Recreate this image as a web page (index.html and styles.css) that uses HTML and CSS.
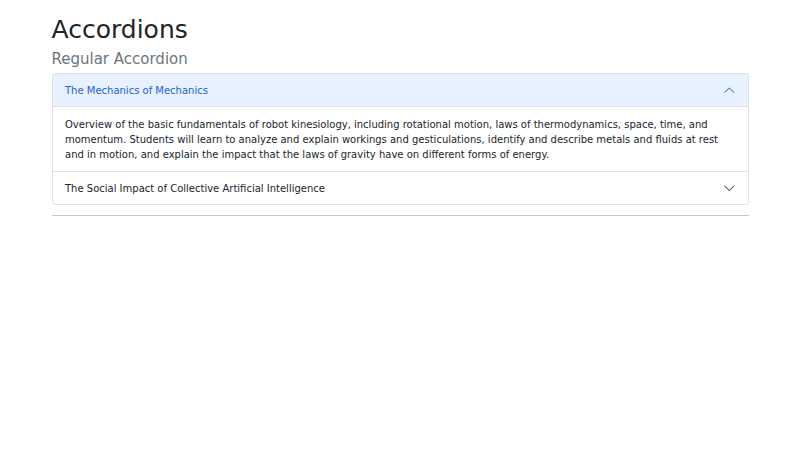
FILE: index.html
```html
<!DOCTYPE html>
<html lang="en">
<head>
  <meta charset="UTF-8">
  <title>Accordions</title>
  <link rel="stylesheet" href="styles.css">
</head>
<body>
  <div class="container">
    <h1 class="title">Accordions</h1>
    <h2 class="subtitle">Regular Accordion</h2>

    <!-- Accordion -->
    <div class="accordion">
      <div class="accordion-item">
        <button class="accordion-button open" type="button">
          <span>The Mechanics of Mechanics</span>
          <svg class="chevron up" viewBox="0 0 16 16"><path fill="currentColor" fill-rule="evenodd" d="M1.646 4.646a.5.5 0 0 1 .708 0L8 10.293l5.646-5.647a.5.5 0 0 1 .708.708l-6 6a.5.5 0 0 1-.708 0l-6-6a.5.5 0 0 1 0-.708z"/></svg>
        </button>
        <div class="accordion-body">
          Overview of the basic fundamentals of robot kinesiology, including rotational motion, laws of thermodynamics, space, time, and momentum. Students will learn to analyze and explain workings and gesticulations, identify and describe metals and fluids at rest and in motion, and explain the impact that the laws of gravity have on different forms of energy.
        </div>
      </div>
      <div class="accordion-item">
        <button class="accordion-button" type="button">
          <span>The Social Impact of Collective Artificial Intelligence</span>
          <svg class="chevron" viewBox="0 0 16 16"><path fill="currentColor" fill-rule="evenodd" d="M1.646 4.646a.5.5 0 0 1 .708 0L8 10.293l5.646-5.647a.5.5 0 0 1 .708.708l-6 6a.5.5 0 0 1-.708 0l-6-6a.5.5 0 0 1 0-.708z"/></svg>
        </button>
      </div>
    </div>

    <hr class="divider">
  </div>
</body>
</html>
```

FILE: styles.css
```css
body {
  margin: 0;
  font-family: "DejaVu Sans", sans-serif;
  color: #212529;
  background: #fff;
}

.container {
  max-width: 697px;
  margin: 0 auto;
  padding: 0 7.5px 0 7.5px;
}

.title {
  font-size: 25px;
  font-weight: 400;
  line-height: 30px;
  margin: 15px 0 5px;
}

.subtitle {
  font-size: 15px;
  font-weight: 400;
  line-height: 18px;
  color: #6c757d;
  margin: 0 0 5px;
}

.accordion {
  border: 1px solid #dee2e6;
  border-radius: 2.5px;
  overflow: hidden;
}

.accordion-item + .accordion-item {
  border-top: 1px solid #dee2e6;
}

.accordion-button {
  display: flex;
  align-items: center;
  justify-content: space-between;
  width: 100%;
  padding: 8.5px 12.5px;
  border: none;
  background: #fff;
  color: #212529;
  font-family: inherit;
  font-size: 10px;
  line-height: 15px;
  text-align: left;
  cursor: pointer;
}

.accordion-button.open {
  background: #e7f1ff;
  color: #1a64c8;
  border-bottom: 1px solid #dee2e6;
}

.chevron {
  width: 12.5px;
  height: 12.5px;
  flex-shrink: 0;
}

.chevron.up {
  transform: rotate(180deg);
}

.accordion-body {
  padding: 9.5px 12.5px;
  font-size: 10px;
  line-height: 15px;
}

.divider {
  border: none;
  border-top: 1px solid #c8c9ca;
  margin: 10px 0;
}
```
